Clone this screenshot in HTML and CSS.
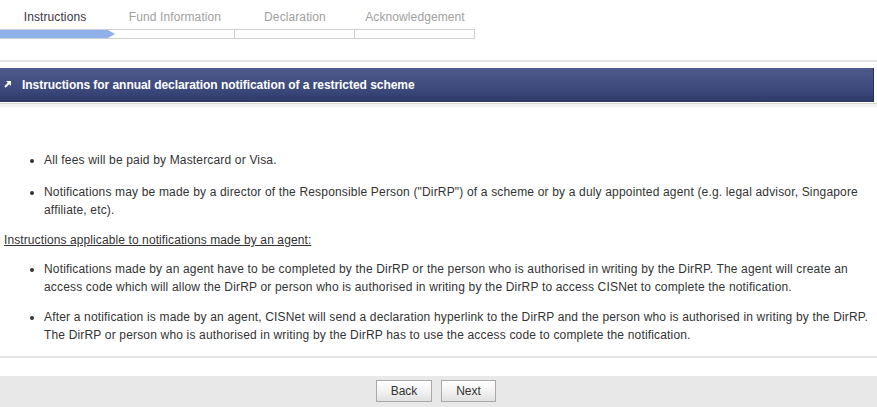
FILE: index.html
```html
<!DOCTYPE html>
<html>
<head>
<meta charset="utf-8">
<link rel="stylesheet" href="styles.css">
</head>
<body>
<div class="steps">
  <div class="step-labels">
    <span class="step step-first active">Instructions</span>
    <span class="step">Fund Information</span>
    <span class="step">Declaration</span>
    <span class="step">Acknowledgement</span>
  </div>
  <div class="progress">
    <div class="seg seg-first"><div class="fill"></div></div>
    <div class="seg"></div>
    <div class="seg"></div>
    <div class="seg"></div>
  </div>
</div>

<div class="section">
  <div class="section-bar">
    <svg class="bar-icon" width="8" height="8" viewBox="0 0 8 8"><path d="M1 7 L6 2" stroke="#fff" stroke-width="1.8" fill="none"/><path d="M2 1 H7 V6 Z" fill="#fff"/></svg>
    <span class="bar-title">Instructions for annual declaration notification of a restricted scheme</span>
  </div>
</div>

<div class="content">
  <ul class="list list-top">
    <li>All fees will be paid by Mastercard or Visa.</li>
    <li>Notifications may be made by a director of the Responsible Person ("DirRP") of a scheme or by a duly appointed agent (e.g. legal advisor, Singapore affiliate, etc).</li>
  </ul>
  <p class="subhead">Instructions applicable to notifications made by an agent:</p>
  <ul class="list">
    <li>Notifications made by an agent have to be completed by the DirRP or the person who is authorised in writing by the DirRP. The agent will create an access code which will allow the DirRP or person who is authorised in writing by the DirRP to access CISNet to complete the notification.</li>
    <li>After a notification is made by an agent, CISNet will send a declaration hyperlink to the DirRP and the person who is authorised in writing by the DirRP. The DirRP or person who is authorised in writing by the DirRP has to use the access code to complete the notification.</li>
  </ul>
</div>

<div class="footer">
  <button class="btn">Back</button>
  <button class="btn btn-next">Next</button>
</div>
</body>
</html>
```

FILE: styles.css
```css
html, body {
  margin: 0;
  padding: 0;
  background: #fff;
  font-family: "Liberation Sans", Arial, sans-serif;
  font-size: 12px;
  color: #333;
}

.steps {
  padding-top: 9px;
}

.step-labels {
  display: flex;
  line-height: 16px;
  letter-spacing: 0.1px;
}

.step {
  width: 120px;
  text-align: center;
  color: #a0a0a0;
}

.step-first {
  width: 110px;
  margin-right: 5px;
}

.step.active {
  color: #3b3340;
}

.progress {
  display: flex;
  margin-top: 4px;
  width: 475px;
  height: 8px;
  border-top: 1px solid #cfcfcf;
  border-bottom: 1px solid #cfcfcf;
}

.seg {
  width: 120px;
  border-right: 1px solid #cfcfcf;
  box-sizing: border-box;
}

.seg-first {
  width: 115px;
  border-right: none;
}

.fill {
  height: 100%;
  background: #8fb0e8;
  clip-path: polygon(0 0, 108px 0, 115px 50%, 108px 100%, 0 100%);
}

.section {
  margin-top: 21px;
  border-top: 2px solid #e6e6e6;
  border-bottom: 1px solid #d8d8d8;
  padding: 6px 3px 1px 0;
  box-shadow: 0 3px 0 #f3f3f3;
}

.section-bar {
  display: flex;
  align-items: center;
  height: 34px;
  background: linear-gradient(#4d5a8b, #3e4a7d 60%, #2f3a6a);
  border-right: 1px solid #2b3050;
  color: #fff;
}

.bar-icon {
  margin-left: 4px;
  margin-right: 10px;
  margin-top: -2px;
}

.bar-title {
  font-weight: bold;
  font-size: 12px;
  letter-spacing: -0.05px;
}

.content {
  padding: 47px 5px 0 4px;
  line-height: 18px;
  letter-spacing: 0.17px;
}

.list {
  margin: 0;
  padding-left: 40px;
  list-style: disc;
}

.list li {
  margin-bottom: 12px;
}

.list li:last-child {
  margin-bottom: 0;
}

.list-top li:first-child {
  margin-bottom: 14px;
}

.subhead {
  margin: 12px 0 11px;
  letter-spacing: 0.1px;
  text-decoration: underline;
}

.footer {
  display: flex;
  justify-content: center;
  gap: 9px;
  margin-top: 12px;
  border-top: 2px solid #e6e6e6;
  background: linear-gradient(#fff 0, #fff 18px, #e8e8e8 18px);
  padding: 22px 5px 6px 0;
}

.btn {
  width: 56px;
  height: 22px;
  padding: 0;
  font-family: "Liberation Sans", Arial, sans-serif;
  font-size: 12px;
  color: #333;
  border: 1px solid #a8a8a8;
  background: linear-gradient(#ffffff, #f2f2f2 50%, #e0e0e0);
  border-radius: 0;
}

.btn-next {
  width: 55px;
}
```
